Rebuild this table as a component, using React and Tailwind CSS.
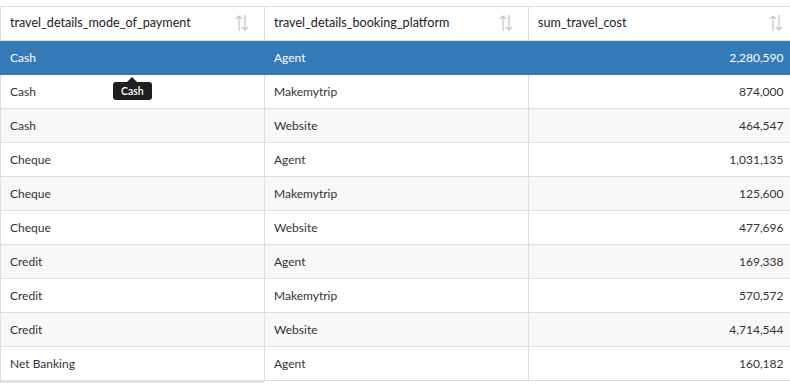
import React from 'react';

const ROWS = [
  ['Cash', 'Agent', '2,280,590'],
  ['Cash', 'Makemytrip', '874,000'],
  ['Cash', 'Website', '464,547'],
  ['Cheque', 'Agent', '1,031,135'],
  ['Cheque', 'Makemytrip', '125,600'],
  ['Cheque', 'Website', '477,696'],
  ['Credit', 'Agent', '169,338'],
  ['Credit', 'Makemytrip', '570,572'],
  ['Credit', 'Website', '4,714,544'],
  ['Net Banking', 'Agent', '160,182'],
];

const COLS = ['travel_details_mode_of_payment', 'travel_details_booking_platform', 'sum_travel_cost'];

const SortIcon = () => (
  <svg width="14" height="18" viewBox="0 0 14 18" fill="none" stroke="#c4c4c4" strokeWidth="1.2">
    <path d="M4 17V2M1 5l3-3 3 3" />
    <path d="M10 1v15M7 13l3 3 3-3" />
  </svg>
);

const App = () => {
  return (
    <div className="w-[790px] h-[387px] bg-white pt-[6px] overflow-hidden" style={{ fontFamily: 'Lato, "Noto Sans", sans-serif' }}>
      <div className="relative">
        <table className="w-[790px] border-collapse table-fixed text-[12px]">
          <colgroup>
            <col className="w-[264px]" />
            <col className="w-[264px]" />
            <col className="w-[262px]" />
          </colgroup>
          <thead>
            <tr className="h-[34px]">
              {COLS.map((c, i) => (
                <th key={c} className="border-t border-b border-l border-[#dedede] font-normal text-left text-[#222] text-[12.6px] px-[9px]">
                  <div className="flex items-center justify-between">
                    <span>{c}</span>
                    <span className={i === 2 ? 'mr-[-1px]' : 'mr-[6px]'}><SortIcon /></span>
                  </div>
                </th>
              ))}
            </tr>
          </thead>
          <tbody>
            {ROWS.map((r, idx) => {
              const selected = idx === 0;
              const rowBg = selected ? 'bg-[#337ab7] text-white' : idx % 2 === 1 ? 'bg-white text-[#333]' : 'bg-[#f8f8f8] text-[#333]';
              const bd = selected ? 'border-[#337ab7]' : 'border-[#dedede]';
              return (
                <tr key={idx} className={`h-[34px] ${rowBg}`}>
                  <td className={`px-[9px] border-b border-l ${bd}`}>{r[0]}</td>
                  <td className={`px-[9px] border-b border-l ${bd}`}>{r[1]}</td>
                  <td className={`px-[7px] text-right border-b border-l ${bd}`}>{r[2]}</td>
                </tr>
              );
            })}
          </tbody>
        </table>
        <div className="h-[2px] w-[264px] bg-[#e2e2e2]" />

        {/* tooltip */}
        <div className="absolute left-[113px] top-[71px] flex flex-col items-center">
          <div className="w-0 h-0 border-l-[5px] border-r-[5px] border-b-[5px] border-l-transparent border-r-transparent border-b-[#1f1f1f]" />
          <div className="bg-[#1f1f1f] text-white text-[10.5px] font-semibold rounded-[3px] px-[8px] py-[3px] leading-[12px]">Cash</div>
        </div>
      </div>
    </div>
  );
};

export default App;
